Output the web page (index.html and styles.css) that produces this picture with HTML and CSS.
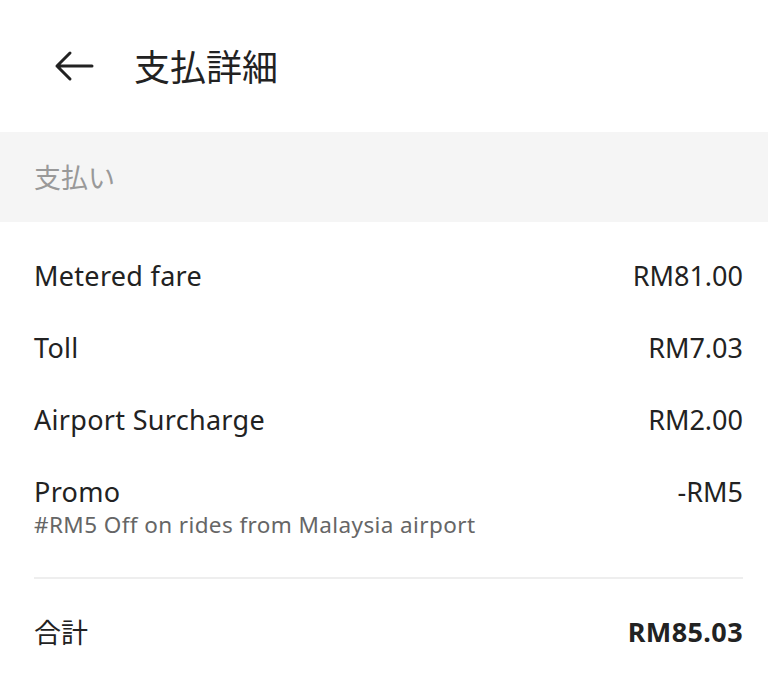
FILE: index.html
```html
<!DOCTYPE html>
<html>
<head>
    <title>支払詳細</title>
    <link rel="stylesheet" href="styles.css">
</head>
<body>
    <div class="header">
        <svg class="back" width="40" height="32" viewBox="0 0 40 32">
            <path d="M38 16 H3 M16 3 L3 16 L16 29" fill="none" stroke="#222" stroke-width="3" stroke-linecap="round" stroke-linejoin="round"/>
        </svg>
        <h1>支払詳細</h1>
    </div>

    <div class="section-title">支払い</div>

    <div class="list">
        <div class="row">
            <span class="label">Metered fare</span>
            <span>RM81.00</span>
        </div>
        <div class="row">
            <span class="label">Toll</span>
            <span>RM7.03</span>
        </div>
        <div class="row">
            <span class="label">Airport Surcharge</span>
            <span>RM2.00</span>
        </div>
        <div class="row promo">
            <div>
                <div class="label">Promo</div>
                <div class="note">#RM5 Off on rides from Malaysia airport</div>
            </div>
            <span>-RM5</span>
        </div>
        <div class="divider"></div>
        <div class="row total">
            <span class="cjk">合計</span>
            <span class="sum">RM85.03</span>
        </div>
    </div>
</body>
</html>
```

FILE: styles.css
```css
body {
    font-family: 'Noto Sans', 'Noto Sans CJK JP', sans-serif;
    margin: 0;
    background-color: #fff;
    color: #222;
}
.header {
    height: 132px;
    display: flex;
    align-items: center;
    padding-left: 54px;
}
.header .back {
    margin-right: 40px;
}
.header h1 {
    margin: 0;
    font-size: 36px;
    font-weight: normal;
    font-family: 'Noto Sans CJK JP', sans-serif;
    position: relative;
    top: -1px;
}
.section-title {
    height: 90px;
    line-height: 90px;
    background-color: #f5f5f5;
    padding-left: 34px;
    font-size: 27px;
    color: #999;
    font-family: 'Noto Sans CJK JP', sans-serif;
}
.list {
    padding: 18px 25px 0 34px;
}
.row {
    display: flex;
    justify-content: space-between;
    align-items: flex-start;
    padding: 18px 0;
    font-size: 27px;
    line-height: 36px;
}
.row .label {
    letter-spacing: 0.3px;
}
.row .note {
    font-size: 22.5px;
    line-height: 30px;
    letter-spacing: 0.4px;
    color: #666;
}
.divider {
    height: 2px;
    background-color: #eee;
    margin-top: 19px;
}
.row.total {
    padding-top: 35px;
}
.row .cjk {
    font-family: 'Noto Sans CJK JP', sans-serif;
}
.row .sum {
    font-weight: bold;
    letter-spacing: 0.4px;
}
```
